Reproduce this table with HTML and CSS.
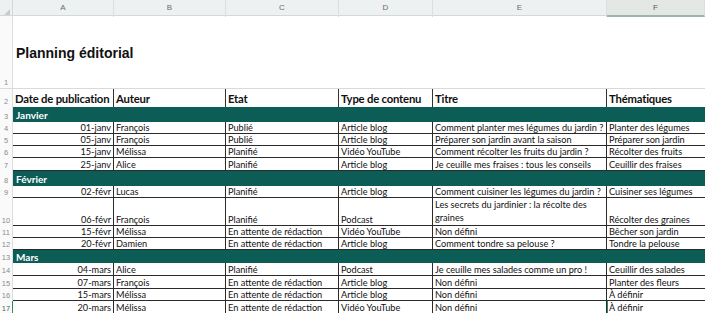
FILE: index.html
```html
<!DOCTYPE html>
<html lang="fr">
<head>
<meta charset="utf-8">
<title>Planning éditorial</title>
<link rel="stylesheet" href="styles.css">
</head>
<body>
<div class="sheet">
  <div class="row colhead">
    <div class="corner"><span class="tri"></span></div>
    <div class="ch">A</div><div class="ch">B</div><div class="ch">C</div><div class="ch">D</div><div class="ch">E</div><div class="ch sel">F</div>
  </div>
  <div class="row r-title">
    <div class="rn">1</div>
    <div class="title">Planning éditorial</div>
  </div>
  <div class="row r-head">
    <div class="rn">2</div>
    <div class="hc">Date de publication</div><div class="hc">Auteur</div><div class="hc">Etat</div><div class="hc">Type de contenu</div><div class="hc">Titre</div><div class="hc last">Thématiques</div>
  </div>
  <div class="row r-group">
    <div class="rn">3</div><div class="gc">Janvier</div>
  </div>
  <div class="row r-data">
    <div class="rn">4</div><div class="dc date">01-janv</div><div class="dc">François</div><div class="dc">Publié</div><div class="dc">Article blog</div><div class="dc">Comment planter mes légumes du jardin ?</div><div class="dc last">Planter des légumes</div>
  </div>
  <div class="row r-data">
    <div class="rn">5</div><div class="dc date">05-janv</div><div class="dc">François</div><div class="dc">Publié</div><div class="dc">Article blog</div><div class="dc">Préparer son jardin avant la saison</div><div class="dc last">Préparer son jardin</div>
  </div>
  <div class="row r-data">
    <div class="rn">6</div><div class="dc date">15-janv</div><div class="dc">Mélissa</div><div class="dc">Planifié</div><div class="dc">Vidéo YouTube</div><div class="dc">Comment récolter les fruits du jardin ?</div><div class="dc last">Récolter des fruits</div>
  </div>
  <div class="row r-data tall">
    <div class="rn">7</div><div class="dc date">25-janv</div><div class="dc">Alice</div><div class="dc">Planifié</div><div class="dc">Article blog</div><div class="dc">Je ceuille mes fraises : tous les conseils</div><div class="dc last">Ceuillir des fraises</div>
  </div>
  <div class="row r-group">
    <div class="rn">8</div><div class="gc">Février</div>
  </div>
  <div class="row r-data">
    <div class="rn">9</div><div class="dc date">02-févr</div><div class="dc">Lucas</div><div class="dc">Planifié</div><div class="dc">Article blog</div><div class="dc">Comment cuisiner les légumes du jardin ?</div><div class="dc last">Cuisiner ses légumes</div>
  </div>
  <div class="row r-double">
    <div class="rn">10</div><div class="dc date">06-févr</div><div class="dc">François</div><div class="dc">Planifié</div><div class="dc">Podcast</div><div class="dc wrap">Les secrets du jardinier : la récolte des graines</div><div class="dc last">Récolter des graines</div>
  </div>
  <div class="row r-data">
    <div class="rn">11</div><div class="dc date">15-févr</div><div class="dc">Mélissa</div><div class="dc">En attente de rédaction</div><div class="dc">Vidéo YouTube</div><div class="dc">Non défini</div><div class="dc last">Bêcher son jardin</div>
  </div>
  <div class="row r-data">
    <div class="rn">12</div><div class="dc date">20-févr</div><div class="dc">Damien</div><div class="dc">En attente de rédaction</div><div class="dc">Article blog</div><div class="dc">Comment tondre sa pelouse ?</div><div class="dc last">Tondre la pelouse</div>
  </div>
  <div class="row r-group short">
    <div class="rn">13</div><div class="gc">Mars</div>
  </div>
  <div class="row r-data tall">
    <div class="rn">14</div><div class="dc date">04-mars</div><div class="dc">Alice</div><div class="dc">Planifié</div><div class="dc">Podcast</div><div class="dc">Je ceuille mes salades comme un pro !</div><div class="dc last">Ceuillir des salades</div>
  </div>
  <div class="row r-data tall">
    <div class="rn">15</div><div class="dc date">07-mars</div><div class="dc">François</div><div class="dc">En attente de rédaction</div><div class="dc">Article blog</div><div class="dc">Non défini</div><div class="dc last">Planter des fleurs</div>
  </div>
  <div class="row r-data">
    <div class="rn">16</div><div class="dc date">15-mars</div><div class="dc">Mélissa</div><div class="dc">En attente de rédaction</div><div class="dc">Article blog</div><div class="dc">Non défini</div><div class="dc last">À définir</div>
  </div>
  <div class="row r-data tall">
    <div class="rn selrow">17</div><div class="dc date">20-mars</div><div class="dc">Mélissa</div><div class="dc">En attente de rédaction</div><div class="dc">Vidéo YouTube</div><div class="dc">Non défini</div><div class="dc last selcell">À définir</div>
  </div>
</div>
</body>
</html>
```
FILE: styles.css
```css
* { box-sizing: border-box; }
html, body { margin: 0; padding: 0; background: #fff; overflow: hidden; }
body { width: 705px; height: 313px; }

.sheet { width: 705px; }

.row {
  display: grid;
  grid-template-columns: 13px 101px 112px 113px 94px 174px 98px;
}

.colhead { height: 16px; background: #eef1f1; border-bottom: 1px solid #d5d8d8; }
.corner { position: relative; border-right: 1px solid #d5d8d8; }
.tri {
  position: absolute; right: 2px; bottom: 2px;
  width: 0; height: 0;
  border-left: 6px solid transparent;
  border-bottom: 6px solid #c8cccc;
}
.ch {
  font-family: "Liberation Sans", Arial, sans-serif;
  font-size: 8px; color: #6b6b6b;
  text-align: center; line-height: 15px;
  border-right: 1px solid #dcdfdf;
}
.ch.sel { background: #e3e8e5; border-bottom: 2px solid #9fb3a8; color: #5a5a5a; }

.rn {
  font-family: "Liberation Sans", Arial, sans-serif;
  font-size: 7.5px; color: #8a8a8a;
  background: #fafafa;
  border-right: 1px solid #dedede;
  display: flex; align-items: flex-end; justify-content: center;
  padding-bottom: 1px;
}
.rn.selrow { border-right: 1px solid #2e8b57; color: #4a6a55; }

.r-title { height: 72px; }
.title {
  grid-column: 2 / span 3;
  font-family: "Liberation Sans", Arial, sans-serif;
  font-weight: bold; font-size: 14px; color: #111;
  display: flex; align-items: center; padding-left: 3px;
  padding-top: 1px;
}

.r-head { height: 19px; border-top: 1px solid #d9d9d9; }
.hc {
  font-family: Lato, "Noto Sans", sans-serif;
  font-weight: bold; font-size: 11.3px; color: #111;
  border-right: 1px solid #333;
  padding-left: 2px;
  display: flex; align-items: center;
  white-space: nowrap; overflow: hidden;
  letter-spacing: -0.2px;
}
.hc.last { border-right: none; }

.r-group { height: 15px; }
.r-group.short { height: 13px; }
.gc {
  grid-column: 2 / -1;
  background: #0b5d56;
  color: #fff;
  font-family: Lato, "Noto Sans", sans-serif;
  font-weight: bold; font-size: 10px;
  padding-left: 3px;
  display: flex; align-items: center;
}

.r-data { height: 12px; }
.r-data.tall { height: 13px; }
.r-double { height: 28px; }
.dc {
  font-family: Lato, "Noto Sans", sans-serif;
  font-size: 9.2px; color: #111;
  border-right: 1px solid #2a2a2a;
  border-bottom: 1px solid #2a2a2a;
  padding-left: 2px;
  display: flex; align-items: flex-end;
  white-space: nowrap; overflow: hidden;
  line-height: 11px;
}
.dc.date { justify-content: flex-end; padding-right: 2px; padding-left: 0; }
.dc.last { border-right: none; }
.dc.wrap { white-space: normal; line-height: 13px; padding-right: 6px; padding-bottom: 1px; }
.dc.selcell { box-shadow: inset 1px 0 0 #2e8b57; }
```
